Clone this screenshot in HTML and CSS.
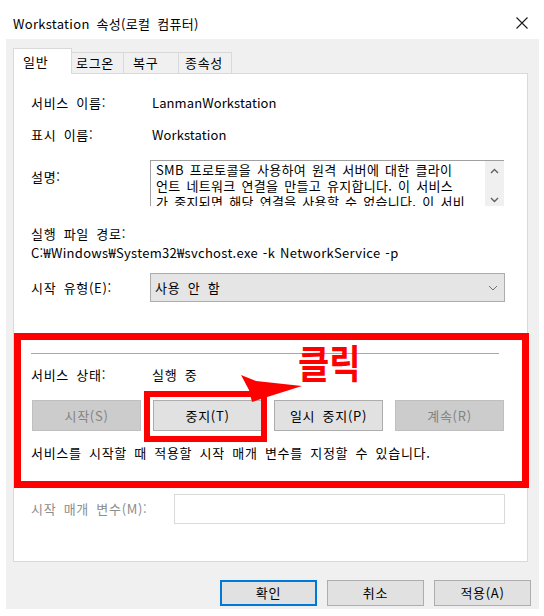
FILE: index.html
```html
<!DOCTYPE html>
<html lang="ko">
<head>
<meta charset="utf-8">
<link rel="stylesheet" href="styles.css">
</head>
<body>
<div class="titlebar">
  <span class="title">Workstation 속성(로컬 컴퓨터)</span>
  <svg class="close" width="12" height="12" viewBox="0 0 12 12"><path d="M0.5 0.5 L11.5 11.5 M11.5 0.5 L0.5 11.5" stroke="#1a1a1a" stroke-width="1.1" fill="none"/></svg>
</div>
<div class="dialog">
  <div class="tabs">
    <div class="tab active">일반</div>
    <div class="tab">로그온</div>
    <div class="tab">복구</div>
    <div class="tab">종속성</div>
  </div>
  <div class="panel">
    <div class="row r-name"><span class="label">서비스 이름:</span><span class="latin">LanmanWorkstation</span></div>
    <div class="row r-disp"><span class="label">표시 이름:</span><span class="latin">Workstation</span></div>
    <div class="row r-desc">
      <span class="label">설명:</span>
      <div class="desc">
        <div class="desc-text">SMB 프로토콜을 사용하여 원격 서버에 대한 클라이<br>언트 네트워크 연결을 만들고 유지합니다. 이 서비스<br>가 중지되면 해당 연결을 사용할 수 없습니다. 이 서비</div>
        <div class="scroll">
          <svg width="9" height="6" viewBox="0 0 9 6"><path d="M1 5 L4.5 1.5 L8 5" stroke="#606060" stroke-width="1.4" fill="none"/></svg>
          <svg width="9" height="6" viewBox="0 0 9 6"><path d="M1 1 L4.5 4.5 L8 1" stroke="#606060" stroke-width="1.4" fill="none"/></svg>
        </div>
      </div>
    </div>
    <div class="exe-label">실행 파일 경로:</div>
    <div class="exe-path">C:₩Windows₩System32₩svchost.exe -k NetworkService -p</div>
    <div class="row r-start">
      <span class="label">시작 유형(E):</span>
      <div class="combo"><span>사용 안 함</span><svg width="10" height="6" viewBox="0 0 10 6"><path d="M1 1 L5 5 L9 1" stroke="#707070" stroke-width="1" fill="none"/></svg></div>
    </div>
    <div class="status-box">
      <div class="sep"></div>
      <div class="row r-status"><span class="label">서비스 상태:</span><span>실행 중</span></div>
      <div class="btns">
        <div class="btn disabled">시작(S)</div>
        <div class="btn hl">중지(T)</div>
        <div class="btn">일시 중지(P)</div>
        <div class="btn disabled">계속(R)</div>
      </div>
      <p class="info">서비스를 시작할 때 적용할 시작 매개 변수를 지정할 수 있습니다.</p>
      <svg class="arrow" width="300" height="80" viewBox="0 0 300 80"><polygon points="220,35 235,41 281,46 243,58 231,62 228,50" fill="#ff0000"/></svg>
      <span class="click">클릭</span>
    </div>
    <div class="row r-param"><span class="label muted">시작 매개 변수(M):</span><div class="param-input"></div></div>
  </div>
  <div class="footer">
    <div class="btn small primary">확인</div>
    <div class="btn small">취소</div>
    <div class="btn small">적용(A)</div>
  </div>
</div>
</body>
</html>
```

FILE: styles.css
```css
* { box-sizing: border-box; }
body {
  margin: 0;
  width: 544px;
  height: 616px;
  overflow: hidden;
  background: #ffffff;
  font-family: "Noto Sans CJK KR", sans-serif;
  font-size: 13px;
  line-height: 16px;
  letter-spacing: 0.7px;
  word-spacing: 3px;
  color: #000;
}
.titlebar {
  height: 39px;
  display: flex;
  align-items: center;
  justify-content: space-between;
  padding: 9px 0 0 13px;
}
.title { font-size: 13px; letter-spacing: 0.3px; word-spacing: 3px; }
.close { margin-right: 16px; margin-bottom: 2px; }
.dialog {
  margin-left: 6px;
  width: 533px;
  height: 570px;
  background: #f0f0f0;
  padding: 9px 0 0 7px;
}
.tabs {
  display: flex;
  align-items: flex-end;
  height: 25px;
}
.tab {
  height: 21px;
  border: 1px solid #d9d9d9;
  border-bottom: none;
  margin-left: -1px;
  line-height: 20px;
  background: #f0f0f0;
}
.tab.active {
  height: 26px;
  margin-left: 0;
  margin-bottom: -1px;
  background: #fff;
  position: relative;
  z-index: 1;
  line-height: 26px;
  width: 59px;
  padding-left: 9px;
}
.tab:nth-child(2) { width: 53px; padding-left: 4px; }
.tab:nth-child(3) { width: 56px; padding-left: 9px; }
.tab:nth-child(4) { width: 54px; padding-left: 6px; }
.panel {
  width: 515px;
  height: 489px;
  border: 1px solid #d9d9d9;
  background: #fff;
  padding: 0 0 0 17px;
}
.row { display: flex; }
.label { width: 121px; flex: none; }
.latin { letter-spacing: 0.1px; }
.r-name { margin-top: 21px; }
.r-disp { margin-top: 16px; }
.r-desc { margin-top: 17px; }
.r-desc .label { width: 119px; padding-top: 9px; }
.desc {
  width: 354px;
  height: 46px;
  display: flex;
  border-top: 1px solid #a0a0a0;
  border-left: 1px solid #a0a0a0;
  overflow: hidden;
}
.desc-text {
  flex: 1;
  padding: 1px 0 0 5px;
  white-space: nowrap;
  overflow: hidden;
  letter-spacing: 0.3px;
  word-spacing: 2px;
}
.scroll {
  width: 19px;
  flex: none;
  background: #f0f0f0;
  display: flex;
  flex-direction: column;
  align-items: center;
  justify-content: space-between;
  padding: 7px 0 3px;
}
.exe-label { margin-top: 20px; }
.exe-path { margin-top: 3px; letter-spacing: 0.3px; word-spacing: 1px; }
.r-start { margin-top: 12px; align-items: center; }
.r-start .label { width: 119px; }
.combo {
  width: 355px;
  height: 29px;
  background: #e5e5e5;
  border: 1px solid #acacac;
  display: flex;
  align-items: center;
  justify-content: space-between;
  padding: 0 6px 0 4px;
}
.status-box {
  position: relative;
  margin-top: 31px;
  margin-left: -17px;
  width: 515px;
  border: 7px solid #ff0000;
  padding: 13px 0 20px 10px;
}
.sep { width: 468px; height: 1px; background: #a8a8a8; }
.r-status { margin-top: 13px; }
.btns {
  margin-top: 17px;
  display: flex;
  gap: 12px;
  padding-left: 1px;
}
.btn {
  width: 109px;
  height: 31px;
  background: #e1e1e1;
  border: 1px solid #adadad;
  display: flex;
  align-items: center;
  justify-content: center;
}
.btn.disabled {
  background: #cccccc;
  border-color: #bfbfbf;
  color: #838383;
}
.btn.hl { position: relative; }
.btn.hl::after {
  content: "";
  position: absolute;
  top: -10px;
  left: -10px;
  right: -6px;
  bottom: -12px;
  border: 6px solid #ff0000;
}
.info { margin: 14px 0 0; }
.arrow {
  position: absolute;
  left: 0;
  top: 0;
  z-index: 2;
}
.click {
  position: absolute;
  left: 277px;
  top: 2px;
  font-size: 34px;
  line-height: 34px;
  font-weight: 700;
  letter-spacing: 0;
  color: #ff0000;
  transform: scaleY(1.15);
  transform-origin: top left;
  z-index: 2;
}
.r-param { margin-top: 6px; align-items: center; }
.r-param .label { width: 143px; }
.muted { color: #8d8d8d; }
.param-input {
  width: 331px;
  height: 30px;
  border: 1px solid #d9d9d9;
  background: #fff;
}
.footer {
  margin-top: 18px;
  margin-right: 8px;
  display: flex;
  justify-content: flex-end;
  gap: 10px;
}
.btn.small { width: 97px; height: 26px; }
.btn.primary { border: 2px solid #0078d7; }
```
